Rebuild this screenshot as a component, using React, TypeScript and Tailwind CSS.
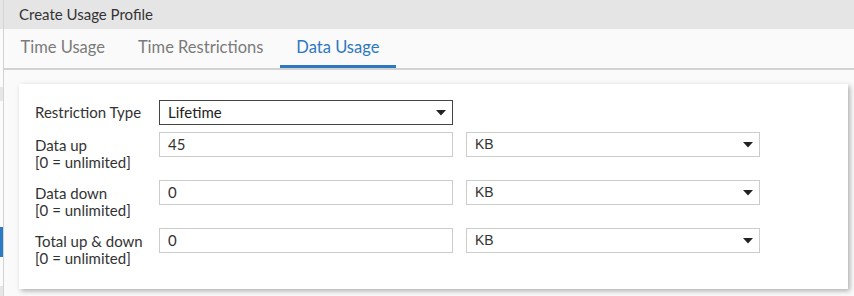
import React from "react";

function Arrow() {
  return (
    <svg width="10" height="6" viewBox="0 0 10 6" className="shrink-0">
      <path d="M0 0 L10 0 L5 5.5 Z" fill="#222" />
    </svg>
  );
}

function TextBox({ value }: { value: string }) {
  return (
    <div className="w-[294px] h-[25px] border border-[#cccccc] bg-white flex items-center pl-[8px] text-[15px] text-[#333]">
      {value}
    </div>
  );
}

function UnitSelect() {
  return (
    <div className="w-[294px] h-[25px] border border-[#cccccc] bg-white flex items-center justify-between pl-[8px] pr-[6px] text-[14px] text-[#333] font-['Liberation_Sans',Arial,sans-serif]">
      <span>KB</span>
      <Arrow />
    </div>
  );
}

function DataRow({ label }: { label: string }) {
  return (
    <div className="flex items-start h-[48px]">
      <div className="w-[124px] pt-[5px] text-[15px] leading-[17px] text-[#333]">
        <div>{label}</div>
        <div>[0 = unlimited]</div>
      </div>
      <TextBox value={label === "Data up" ? "45" : "0"} />
      <div className="w-[13px]" />
      <UnitSelect />
    </div>
  );
}

export default function App() {
  return (
    <div className="w-[854px] h-[296px] overflow-hidden flex bg-[#fafafa] font-['Lato','Noto_Sans',sans-serif]">
      <div className="w-[4px] h-full flex flex-col border-r border-[#d4d4d4] bg-[#fbfbfb]">
        <div className="h-[29px] bg-[#e5e5e5]" />
        <div className="h-[58px]" />
        <div className="h-[14px] bg-[#e6e6e6]" />
        <div className="h-[126px]" />
        <div className="h-[30px] bg-[#2b7bc2]" />
        <div className="h-[29px]" />
        <div className="flex-1 bg-[#e6e6e6]" />
      </div>
      <div className="flex-1 flex flex-col min-w-0">
        <div className="h-[29px] bg-[#e5e5e5] flex items-center pl-[15px] text-[15px] text-[#333]">
          Create Usage Profile
        </div>
        <div className="h-[39px] flex bg-[#fafafa]">
          <div className="px-[16.5px] flex items-center text-[16.5px] text-[#7b7b7b] border-b-[3px] border-transparent">
            Time Usage
          </div>
          <div className="px-[16.5px] flex items-center text-[16.5px] text-[#7b7b7b] border-b-[3px] border-transparent">
            Time Restrictions
          </div>
          <div className="px-[16.5px] flex items-center text-[16.5px] text-[#2d78c0] border-b-[3px] border-[#2d78c0]">
            Data Usage
          </div>
        </div>
        <div className="h-[2px] bg-[#d2d2d2]" />
        <div className="flex-1 pt-[14px] pl-[15px] pr-[6px]">
          <div className="h-[205px] bg-white shadow-[2px_2px_5px_rgba(0,0,0,0.3)] pt-[16px] pl-[16px]">
            <div className="flex items-center h-[25px]">
              <div className="w-[124px] text-[15px] text-[#333]">Restriction Type</div>
              <div className="w-[294px] h-[25px] border border-[#444] bg-white flex items-center justify-between pl-[8px] pr-[6px] text-[15px] text-[#222]">
                <span>Lifetime</span>
                <Arrow />
              </div>
            </div>
            <div className="h-[7px]" />
            <DataRow label="Data up" />
            <DataRow label="Data down" />
            <DataRow label="Total up & down" />
          </div>
        </div>
      </div>
    </div>
  );
}
